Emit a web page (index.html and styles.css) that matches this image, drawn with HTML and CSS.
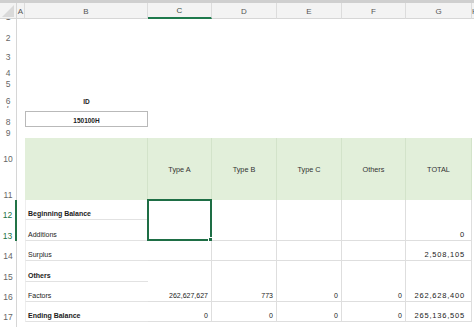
FILE: index.html
```html
<!DOCTYPE html>
<html>
<head>
<meta charset="utf-8">
<link rel="stylesheet" href="styles.css">
</head>
<body>
<div class="topbar"></div>
<div class="sheet">
  <div class="corner"><svg width="16" height="15" viewBox="0 0 16 15"><polygon points="14,2 14,14 2,14" fill="#d9d9d9"/></svg></div>
  <div class="colhead">A</div>
  <div class="colhead">B</div>
  <div class="colhead sel">C</div>
  <div class="colhead">D</div>
  <div class="colhead">E</div>
  <div class="colhead">F</div>
  <div class="colhead">G</div>
  <div class="colhead">H</div>

  <div class="rowhead r1">1</div>
  <div class="rowhead r2">2</div>
  <div class="rowhead r3">3</div>
  <div class="rowhead r4">4</div>
  <div class="rowhead r5">5</div>
  <div class="rowhead r6">6</div>
  <div class="rowhead r7">7</div>
  <div class="rowhead r8">8</div>
  <div class="rowhead r9">9</div>
  <div class="rowhead r10">10</div>
  <div class="rowhead r11">11</div>
  <div class="rowhead r12 rsel">12</div>
  <div class="rowhead r13 rsel">13</div>
  <div class="rowhead r14">14</div>
  <div class="rowhead r15">15</div>
  <div class="rowhead r16">16</div>
  <div class="rowhead r17">17</div>
  <div class="rowhead r18"></div>

  <div class="idlabel r6 cB">ID</div>
  <div class="idbox r8 cB">150100H</div>

  <div class="green g10 cB"></div>
  <div class="green g10 cC">Type A</div>
  <div class="green g10 cD">Type B</div>
  <div class="green g10 cE">Type C</div>
  <div class="green g10 cF">Others</div>
  <div class="green g10 cG">TOTAL</div>

  <div class="label bold r12 cB">Beginning Balance</div>
  <div class="label r13 cB">Additions</div>
  <div class="num m12 cC"><div class="selection"><div class="handle"></div></div></div>
  <div class="num m12 cD"></div>
  <div class="num m12 cE"></div>
  <div class="num m12 cF"></div>
  <div class="num tot m12 cG">0</div>

  <div class="label r14 cB">Surplus</div>
  <div class="num r14 cC"></div>
  <div class="num r14 cD"></div>
  <div class="num r14 cE"></div>
  <div class="num r14 cF"></div>
  <div class="num tot r14 cG">2,508,105</div>

  <div class="label bold r15 cB">Others</div>
  <div class="label r16 cB">Factors</div>
  <div class="num m15 cC">262,627,627</div>
  <div class="num m15 cD">773</div>
  <div class="num m15 cE">0</div>
  <div class="num m15 cF">0</div>
  <div class="num tot m15 cG">262,628,400</div>

  <div class="label bold r17 cB">Ending Balance</div>
  <div class="num r17 cC">0</div>
  <div class="num r17 cD">0</div>
  <div class="num r17 cE">0</div>
  <div class="num r17 cF">0</div>
  <div class="num tot r17 cG">265,136,505</div>
</div>
</body>
</html>
```

FILE: styles.css
```css
* { box-sizing: border-box; }
html, body {
  margin: 0;
  padding: 0;
  width: 474px;
  height: 327px;
  overflow: hidden;
  background: #ffffff;
  font-family: "Liberation Sans", Arial, sans-serif;
  color: #222;
}
.topbar {
  height: 3px;
  background: #cfcfcf;
}
.sheet {
  display: grid;
  grid-template-columns: 17px 8px 123px 64px 65px 65px 64px 66px 1fr;
  grid-template-rows: 16px 3px 21px 19px 16px 11px 17px 4px 17px 11px 26px 36px 20px 21px 20px 21px 20px 20px 1fr;
  height: 324px;
}
.corner {
  background: #f3f3f3;
  border-right: 1px solid #d6d6d6;
  border-bottom: 1px solid #d6d6d6;
  display: flex;
  align-items: flex-end;
}
.corner svg { display: block; }
.colhead {
  background: #f3f3f3;
  border-right: 1px solid #dcdcdc;
  border-bottom: 1px solid #d6d6d6;
  font-size: 8px;
  color: #555;
  display: flex;
  align-items: center;
  justify-content: center;
  padding-top: 1px;
}
.colhead:first-of-type { justify-content: flex-start; }
.colhead.sel {
  border-bottom: 2px solid #1f7a4d;
  color: #3d4f45;
}
.rowhead {
  grid-column: 1;
  border-right: 1px solid #d6d6d6;
  font-size: 8.5px;
  color: #666;
  display: flex;
  align-items: flex-end;
  justify-content: center;
  overflow: hidden;
  line-height: 10px;
  padding-bottom: 0;
}
.rowhead.rsel {
  color: #217346;
  border-right: 2px solid #217346;
}
.r1 { grid-row: 2; }
.r2 { grid-row: 3; }
.r3 { grid-row: 4; }
.r4 { grid-row: 5; }
.r5 { grid-row: 6; }
.r6 { grid-row: 7; }
.r7 { grid-row: 8; }
.r8 { grid-row: 9; }
.r9 { grid-row: 10; }
.r10 { grid-row: 11; }
.r11 { grid-row: 12; }
.r12 { grid-row: 13; }
.r13 { grid-row: 14; }
.r14 { grid-row: 15; }
.r15 { grid-row: 16; }
.r16 { grid-row: 17; }
.r17 { grid-row: 18; }
.r18 { grid-row: 19; }
.g10 { grid-row: 11 / 13; }
.m12 { grid-row: 13 / 15; }
.m15 { grid-row: 16 / 18; }
.cB { grid-column: 3; }
.cC { grid-column: 4; }
.cD { grid-column: 5; }
.cE { grid-column: 6; }
.cF { grid-column: 7; }
.cG { grid-column: 8; }

.idlabel {
  font-size: 6.5px;
  font-weight: bold;
  display: flex;
  align-items: flex-end;
  justify-content: center;
  padding-bottom: 1px;
}
.idbox {
  border: 1px solid #b9b9b9;
  font-size: 6.5px;
  font-weight: bold;
  display: flex;
  align-items: center;
  justify-content: center;
  margin-top: 1px;
  padding-top: 2px;
}
.green {
  background: #e2efda;
  border-right: 1px solid #d3e3ca;
  font-size: 7.3px;
  color: #333;
  display: flex;
  align-items: center;
  justify-content: center;
}
.label {
  font-size: 7px;
  line-height: 9px;
  color: #222;
  display: flex;
  align-items: flex-end;
  padding: 0 0 1px 2px;
  border-bottom: 1px solid #e2e2e2;
  border-left: 1px solid #eeeeee;
}
.label.bold { font-weight: bold; }
.num {
  position: relative;
  font-size: 7px;
  line-height: 9px;
  color: #222;
  display: flex;
  align-items: flex-end;
  justify-content: flex-end;
  padding: 0 3px 1px 0;
  border-right: 1px solid #dedede;
  border-bottom: 1px solid #dedede;
}
.num.tot {
  font-size: 7.5px;
  padding-right: 6px;
  letter-spacing: 0.8px;
}
.selection {
  position: absolute;
  left: -1px;
  top: -1px;
  right: -1px;
  bottom: -1px;
  border: 2px solid #1e6e45;
}
.handle {
  position: absolute;
  right: -3px;
  bottom: -3px;
  width: 5px;
  height: 5px;
  background: #1e6e45;
  border: 1px solid #fff;
}
```
